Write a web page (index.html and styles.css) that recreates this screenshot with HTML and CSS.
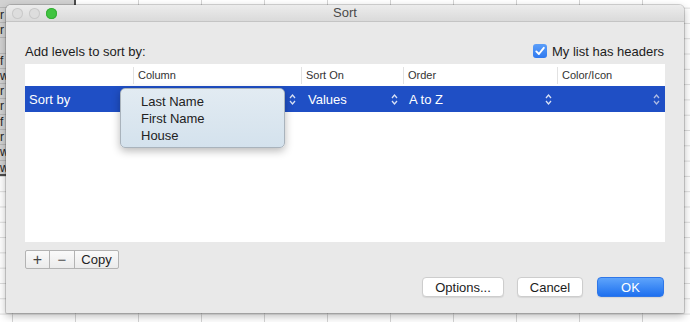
FILE: index.html
```html
<!DOCTYPE html>
<html>
<head>
<meta charset="utf-8">
<link rel="stylesheet" href="styles.css">
</head>
<body>
<div class="desktop">
  <div class="col-a">
    <div class="cells">
      <div class="cell"></div>
      <div class="cell">r</div>
      <div class="cell">r</div>
      <div class="cell"></div>
      <div class="cell">f</div>
      <div class="cell">w</div>
      <div class="cell">r</div>
      <div class="cell">r</div>
      <div class="cell">f</div>
      <div class="cell">r</div>
      <div class="cell">w</div>
      <div class="cell">w</div>
    </div>
  </div>

  <div class="window">
    <div class="titlebar">
      <div class="lights">
        <span class="light"></span>
        <span class="light"></span>
        <span class="light green"></span>
      </div>
      <div class="title">Sort</div>
      <div></div>
    </div>
    <div class="content">
      <div class="toprow">
        <span>Add levels to sort by:</span>
        <label class="check">
          <span class="box"><svg width="12" height="12" viewBox="0 0 12 12"><path d="M2.3 6.4 L4.9 9 L9.8 2.8" fill="none" stroke="#fff" stroke-width="1.9" stroke-linecap="round" stroke-linejoin="round"/></svg></span>
          <span>My list has headers</span>
        </label>
      </div>
      <div class="table">
        <div class="thead">
          <div class="th"></div>
          <div class="th">Column</div>
          <div class="th">Sort On</div>
          <div class="th">Order</div>
          <div class="th">Color/Icon</div>
        </div>
        <div class="row">
          <div class="td first"><span>Sort by</span></div>
          <div class="td"><span></span><svg class="step" width="7" height="13" viewBox="0 0 7 13"><path d="M1 5 L3.5 2 L6 5 M1 8 L3.5 11 L6 8" fill="none" stroke="currentColor" stroke-width="1.3"/></svg></div>
          <div class="td values"><span>Values</span><svg class="step" width="7" height="13" viewBox="0 0 7 13"><path d="M1 5 L3.5 2 L6 5 M1 8 L3.5 11 L6 8" fill="none" stroke="currentColor" stroke-width="1.3"/></svg></div>
          <div class="td order"><span>A to Z</span><svg class="step" width="7" height="13" viewBox="0 0 7 13"><path d="M1 5 L3.5 2 L6 5 M1 8 L3.5 11 L6 8" fill="none" stroke="currentColor" stroke-width="1.3"/></svg></div>
          <div class="td"><span></span><svg class="step faint" width="7" height="13" viewBox="0 0 7 13"><path d="M1 5 L3.5 2 L6 5 M1 8 L3.5 11 L6 8" fill="none" stroke="currentColor" stroke-width="1.3"/></svg></div>
        </div>
        <div class="popup">
          <div>Last Name</div>
          <div>First Name</div>
          <div>House</div>
        </div>
      </div>
      <div class="seg">
        <span class="seg-btn plus">+</span>
        <span class="seg-btn minus">−</span>
        <span class="seg-btn copy">Copy</span>
      </div>
      <div class="actions">
        <span class="btn options">Options...</span>
        <span class="btn cancel">Cancel</span>
        <span class="btn ok">OK</span>
      </div>
    </div>
  </div>
</div>
</body>
</html>
```

FILE: styles.css
```css
body {
  margin: 0;
  font-family: "Liberation Sans", Arial, sans-serif;
}

.desktop {
  position: relative;
  width: 690px;
  height: 322px;
  overflow: hidden;
  background-color: #ffffff;
  background-image:
    linear-gradient(to right, #d4d4d4 1px, transparent 1px),
    linear-gradient(to bottom, #dcdcdc 1px, transparent 1px);
  background-size: 63px 100%, 100% 15.3px;
  background-position: 12px 0, 0 7.65px;
}

.col-a {
  width: 74px;
  height: 174px;
  background: #d2d2d2;
  border-right: 2px solid #4d4d4d;
  border-bottom: 2px solid #4d4d4d;
  overflow: hidden;
}

.cells {
  margin-top: -7.65px;
}

.cell {
  height: 15.3px;
  box-sizing: border-box;
  border-bottom: 1px solid #b8b8b8;
  font-size: 12px;
  line-height: 15px;
  color: #222;
  padding-left: 0;
}

.window {
  position: absolute;
  left: 6px;
  top: 5px;
  width: 678px;
  height: 308px;
  background: #e9e9e9;
  border-radius: 5px 5px 1px 1px;
  box-shadow: 0 0 0 1px rgba(0, 0, 0, 0.16), 0 3px 9px rgba(0, 0, 0, 0.28);
  display: flex;
  flex-direction: column;
}

.titlebar {
  height: 17px;
  box-sizing: border-box;
  display: grid;
  grid-template-columns: 1fr auto 1fr;
  align-items: center;
  background: linear-gradient(#ececec, #dadada);
  border-bottom: 1px solid #c4c4c4;
  border-radius: 5px 5px 0 0;
}

.lights {
  display: flex;
  gap: 6px;
  padding-left: 6px;
}

.light {
  width: 11px;
  height: 11px;
  border-radius: 50%;
  background: #dddddd;
  box-shadow: inset 0 0 0 1px #c9c9c9;
}

.light.green {
  background: #41c441;
  box-shadow: inset 0 0 0 1px #35ad35;
}

.title {
  font-size: 13px;
  color: #4a4a4a;
  line-height: 16px;
}

.content {
  padding: 20px 19px 0 19px;
  display: flex;
  flex-direction: column;
}

.toprow {
  height: 18px;
  display: flex;
  justify-content: space-between;
  align-items: center;
  font-size: 13px;
  color: #1c1c1c;
}

.check {
  display: flex;
  align-items: center;
  gap: 5px;
  padding-right: 1px;
}

.box {
  width: 14px;
  height: 14px;
  border-radius: 3px;
  background: linear-gradient(#5b9ef9, #2f79ef);
  display: flex;
  align-items: center;
  justify-content: center;
}

.table {
  position: relative;
  margin-top: 4px;
  height: 178px;
  background: #ffffff;
}

.thead,
.row {
  display: grid;
  grid-template-columns: 108px 168px 102px 154px 108px;
}

.thead {
  height: 22px;
  align-items: center;
  font-size: 11px;
  color: #333;
}

.th {
  height: 17px;
  line-height: 17px;
  padding-left: 4px;
}

.th + .th {
  border-left: 1px solid #e2e2e2;
}

.row {
  height: 26px;
  background: #1f4fc5;
  color: #ffffff;
  font-size: 13px;
}

.td {
  display: flex;
  align-items: center;
  justify-content: space-between;
  padding: 0 5px 0 6px;
}

.td.first {
  padding-left: 4px;
}

.td.values {
  padding-left: 7px;
}

.step {
  color: #d9e1f5;
}

.step.faint {
  color: #aebbe3;
}

.popup {
  position: absolute;
  left: 95px;
  top: 24px;
  width: 165px;
  height: 60px;
  box-sizing: border-box;
  border-radius: 5px;
  background: linear-gradient(#e2ebf2, #d4e2ed);
  border: 1px solid #a9b3bc;
  box-shadow: 0 3px 8px rgba(0, 0, 0, 0.28);
  padding: 4px 0 0 20px;
  font-size: 13px;
  line-height: 17px;
  color: #222;
}

.seg {
  margin-top: 8px;
  align-self: flex-start;
  display: flex;
  height: 19px;
  box-sizing: border-box;
  border: 1px solid #b3b3b3;
  border-radius: 2px;
  background: linear-gradient(#fafafa, #ebebeb);
  font-size: 13px;
  color: #222;
}

.seg-btn {
  display: flex;
  align-items: center;
  justify-content: center;
  height: 17px;
}

.seg-btn + .seg-btn {
  border-left: 1px solid #b3b3b3;
}

.plus {
  width: 23px;
  font-size: 16px;
  color: #444;
}

.minus {
  width: 24px;
  font-size: 15px;
  color: #555;
}

.copy {
  width: 43px;
}

.actions {
  margin-top: 8px;
  display: flex;
  justify-content: flex-end;
  padding-right: 1px;
}

.btn {
  height: 20px;
  box-sizing: border-box;
  border-radius: 4px;
  background: #ffffff;
  border: 1px solid #cdcdcd;
  box-shadow: 0 1px 1px rgba(0, 0, 0, 0.08);
  font-size: 13px;
  color: #1c1c1c;
  display: flex;
  align-items: center;
  justify-content: center;
}

.options {
  width: 82px;
}

.cancel {
  width: 66px;
  margin-left: 13px;
}

.ok {
  width: 67px;
  margin-left: 14px;
  background: linear-gradient(#5ea4fb, #1e70ef);
  border-color: #2f77e8;
  color: #ffffff;
}
```
